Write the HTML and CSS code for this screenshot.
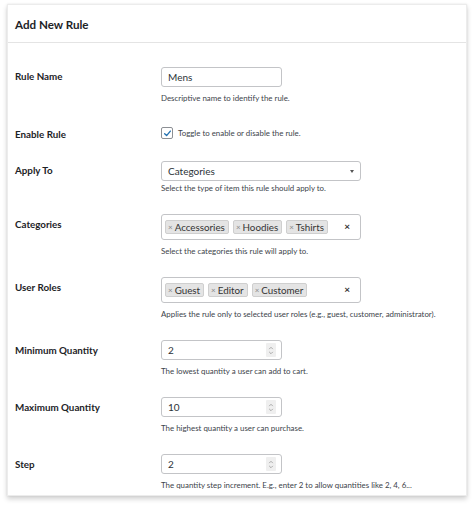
FILE: index.html
```html
<!DOCTYPE html>
<html lang="en">
<head>
<meta charset="utf-8">
<title>Add New Rule</title>
<link rel="stylesheet" href="styles.css">
</head>
<body>
<div class="card">
  <h2 class="card-title">Add New Rule</h2>
  <div class="form">
    <div class="row row-name">
      <div class="label">Rule Name</div>
      <div class="field">
        <div class="input short">Mens</div>
        <div class="desc">Descriptive name to identify the rule.</div>
      </div>
    </div>
    <div class="row row-enable">
      <div class="label">Enable Rule</div>
      <div class="field">
        <div class="check-line">
          <span class="checkbox"><svg viewBox="0 0 12 12" width="9" height="9"><path d="M2.2 6.3 L4.8 8.8 L9.8 2.8" fill="none" stroke="#2271b1" stroke-width="1.8" stroke-linecap="round" stroke-linejoin="round"/></svg></span>
          <span class="desc inline">Toggle to enable or disable the rule.</span>
        </div>
      </div>
    </div>
    <div class="row row-apply">
      <div class="label">Apply To</div>
      <div class="field">
        <div class="input wide select">Categories<span class="caret"></span></div>
        <div class="desc tight">Select the type of item this rule should apply to.</div>
      </div>
    </div>
    <div class="row row-cats">
      <div class="label">Categories</div>
      <div class="field">
        <div class="multi wide">
          <span class="tag"><span class="x">×</span>Accessories</span>
          <span class="tag"><span class="x">×</span>Hoodies</span>
          <span class="tag"><span class="x">×</span>Tshirts</span>
          <span class="clear">×</span>
        </div>
        <div class="desc">Select the categories this rule will apply to.</div>
      </div>
    </div>
    <div class="row row-roles">
      <div class="label">User Roles</div>
      <div class="field">
        <div class="multi wide">
          <span class="tag"><span class="x">×</span>Guest</span>
          <span class="tag"><span class="x">×</span>Editor</span>
          <span class="tag"><span class="x">×</span>Customer</span>
          <span class="clear">×</span>
        </div>
        <div class="desc">Applies the rule only to selected user roles (e.g., guest, customer, administrator).</div>
      </div>
    </div>
    <div class="row row-min">
      <div class="label">Minimum Quantity</div>
      <div class="field">
        <div class="input short number">2<span class="spin"><svg viewBox="0 0 8 12" width="8" height="11"><path d="M2 4.5 L4 2.5 L6 4.5 M2 7.5 L4 9.5 L6 7.5" fill="none" stroke="#9a9a9a" stroke-width="0.9"/></svg></span></div>
        <div class="desc">The lowest quantity a user can add to cart.</div>
      </div>
    </div>
    <div class="row row-max">
      <div class="label">Maximum Quantity</div>
      <div class="field">
        <div class="input short number">10<span class="spin"><svg viewBox="0 0 8 12" width="8" height="11"><path d="M2 4.5 L4 2.5 L6 4.5 M2 7.5 L4 9.5 L6 7.5" fill="none" stroke="#9a9a9a" stroke-width="0.9"/></svg></span></div>
        <div class="desc">The highest quantity a user can purchase.</div>
      </div>
    </div>
    <div class="row row-step">
      <div class="label">Step</div>
      <div class="field">
        <div class="input short number">2<span class="spin"><svg viewBox="0 0 8 12" width="8" height="11"><path d="M2 4.5 L4 2.5 L6 4.5 M2 7.5 L4 9.5 L6 7.5" fill="none" stroke="#9a9a9a" stroke-width="0.9"/></svg></span></div>
        <div class="desc">The quantity step increment. E.g., enter 2 to allow quantities like 2, 4, 6...</div>
      </div>
    </div>
  </div>
</div>
</body>
</html>
```
FILE: styles.css
```css
* { box-sizing: border-box; }
html, body { margin: 0; padding: 0; background: #ffffff; }
body {
  font-family: Lato, "Open Sans", sans-serif;
  color: #1d2327;
  padding: 4px 7px 0 7px;
  width: 474px;
  height: 508px;
  overflow: hidden;
}
.card {
  width: 460px;
  height: 492px;
  background: #fff;
  border: 1px solid #ececec;
  box-shadow: 0 3px 5px rgba(0,0,0,0.18), 0 0 2px rgba(0,0,0,0.08);
}
.card-title {
  margin: 0;
  padding: 12px 7px 9px 7px;
  font-size: 11.6px;
  font-weight: 700;
  line-height: 16px;
  border-bottom: 1px solid #e4e4e4;
}
.form { padding: 24px 0 0 0; }
.row { display: flex; }
.label {
  width: 153px;
  padding-left: 7px;
  font-size: 9.8px;
  font-weight: 700;
  line-height: 14px;
}
.field { flex: 1; }
.input {
  height: 20px;
  border: 1px solid #c3c4c7;
  border-radius: 3px;
  font-size: 10px;
  line-height: 18px;
  padding: 0 6px;
  color: #2c3338;
  background: #fff;
}
.short { width: 121px; }
.wide { width: 200px; }
.desc {
  font-size: 7.9px;
  color: #3c434a;
  line-height: 11px;
  margin-top: 6px;
}
.desc.tight { margin-top: 2px; }
.desc.inline { margin-top: 0; }
.row-name .label { padding-top: 2px; }
.row-enable { margin-top: 23px; }
.check-line { display: flex; align-items: center; gap: 5px; }
.checkbox {
  width: 12px; height: 12px;
  border: 1px solid #8c8f94;
  border-radius: 2px;
  display: flex; align-items: center; justify-content: center;
  background: #fff;
}
.row-apply { margin-top: 20px; }
.row-apply .label { padding-top: 2px; }
.select { display: flex; align-items: center; justify-content: space-between; }
.caret {
  width: 0; height: 0;
  border-left: 2.5px solid transparent;
  border-right: 2.5px solid transparent;
  border-top: 3px solid #555;
}
.row-cats { margin-top: 20px; }
.row-cats .label, .row-roles .label { padding-top: 3px; }
.multi {
  height: 26px;
  border: 1px solid #c3c4c7;
  border-radius: 3px;
  display: flex;
  align-items: center;
  padding: 0 3px;
  gap: 4px;
  position: relative;
}
.tag {
  display: inline-flex;
  align-items: center;
  height: 14px;
  padding: 0 3px 0 2px;
  background: #e4e4e4;
  border: 1px solid #cfcfcf;
  border-radius: 2px;
  font-size: 9.8px;
  color: #333;
  line-height: 12px;
}
.tag .x { font-size: 8px; color: #888; margin-right: 2px; }
.clear {
  position: absolute;
  right: 10px;
  top: 5px;
  font-size: 10px;
  font-weight: 700;
  color: #333;
}
.row-roles { margin-top: 20px; }
.row-min { margin-top: 20px; }
.row-min .label, .row-max .label, .row-step .label { padding-top: 3px; }
.row-max { margin-top: 20px; }
.row-step { margin-top: 20px; }
.number { display: flex; align-items: center; justify-content: space-between; padding-right: 5px; }
.spin {
  width: 10px; height: 14px;
  background: #efefef;
  display: flex; align-items: center; justify-content: center;
  border-radius: 1px;
}
```
